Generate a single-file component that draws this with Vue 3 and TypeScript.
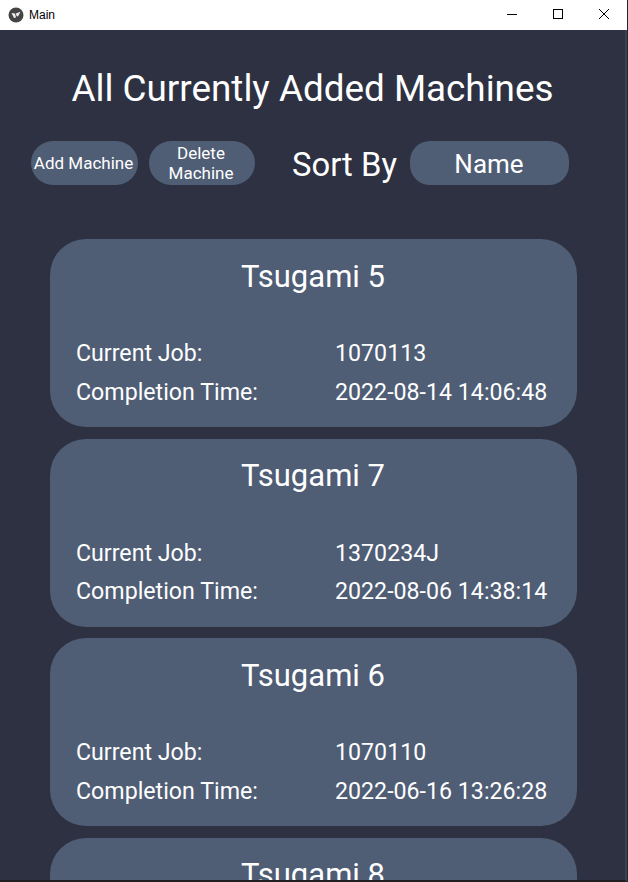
<script setup lang="ts">
interface Machine { name: string; job?: string; time?: string }
const machines: Machine[] = [
  { name: 'Tsugami 5', job: '1070113', time: '2022-08-14 14:06:48' },
  { name: 'Tsugami 7', job: '1370234J', time: '2022-08-06 14:38:14' },
  { name: 'Tsugami 6', job: '1070110', time: '2022-06-16 13:26:28' },
  { name: 'Tsugami 8' },
]
</script>

<template>
  <div class="window">
    <header class="titlebar">
      <svg class="logo" viewBox="0 0 16 16" width="16" height="16">
        <circle cx="8" cy="8" r="7.5" fill="#444" />
        <path d="M3.5 6 L7 6.5 L8 10.5 L6 11 Z M7.8 6.5 L12.5 4.8 L10 9.5 L8.6 9 Z" fill="#eee" />
      </svg>
      <span class="wintitle">Main</span>
      <div class="controls">
        <svg viewBox="0 0 46 30" width="46" height="30"><path d="M18 14.5 H28" stroke="#000" fill="none" /></svg>
        <svg viewBox="0 0 46 30" width="46" height="30"><rect x="18.5" y="9.5" width="9" height="9" stroke="#000" fill="none" /></svg>
        <svg viewBox="0 0 46 30" width="46" height="30"><path d="M18 9 L28 19 M28 9 L18 19" stroke="#000" fill="none" /></svg>
      </div>
    </header>
    <main class="content">
      <h1 class="heading">All Currently Added Machines</h1>
      <div class="toolbar">
        <button class="btn add">Add Machine</button>
        <button class="btn del">Delete<br />Machine</button>
        <span class="sort-label">Sort By</span>
        <button class="sort">Name</button>
      </div>
      <div class="list">
        <section v-for="m in machines" :key="m.name" class="card">
          <h2 class="card-title">{{ m.name }}</h2>
          <template v-if="m.job">
            <div class="row"><span class="key">Current Job:</span><span>{{ m.job }}</span></div>
            <div class="row second"><span class="key">Completion Time:</span><span>{{ m.time }}</span></div>
          </template>
        </section>
      </div>
    </main>
  </div>
</template>

<style>
html, body { margin: 0; overflow: hidden; }
</style>

<style scoped>
.window {
  width: 628px; height: 882px; box-sizing: border-box; display: flex; flex-direction: column; overflow: hidden;
  font-family: Roboto, sans-serif; color: #fff; background: #2d3142; border-right: 1px solid #23252f;
}
.titlebar {
  height: 30px; flex: none; background: #fff; color: #000; display: flex; align-items: center;
  padding-left: 8px; box-sizing: border-box;
}
.logo { margin-right: 5px; }
.wintitle { font: 12px "Liberation Sans", sans-serif; }
.controls { margin-left: auto; display: flex; }
.controls svg { display: block; }
.content { flex: 1; min-height: 0; overflow: hidden; border-right: 2px solid #3d4253; border-bottom: 2px solid #1e1e1e; }
.heading {
  margin: 0; padding-top: 38px; height: 42px; line-height: 42px; text-align: center;
  font-size: 36.85px; font-weight: 400; width: 625px;
}
.toolbar { display: flex; align-items: center; margin-top: 31px; padding-left: 31px; height: 44px; }
.btn, .sort {
  border: 0; background: #4f5d75; color: #fff; font-family: inherit; padding: 0; display: block;
}
.btn { height: 44px; width: 107px; border-radius: 22px; font-size: 17px; line-height: 20px; padding-right: 2px; }
.del { margin-left: 11px; width: 106px; }
.sort-label { font-size: 32.8px; margin-left: 37px; width: 118px; white-space: nowrap; padding-top: 4px; }
.sort { width: 159px; height: 44px; border-radius: 20px; font-size: 26px; padding-top: 1px; padding-right: 1px; }
.list { margin-top: 54px; padding-left: 50px; display: flex; flex-direction: column; gap: 11.6px; }
.card {
  width: 527px; height: 188px; flex: none; box-sizing: border-box; background: #4f5d75;
  border-radius: 36px; padding: 0 26px;
}
.card-title {
  margin: 0; padding-top: 18.6px; height: 38px; line-height: 38px; font-size: 31px; font-weight: 400;
  text-align: center; width: 474px;
}
.row { display: flex; font-size: 23.2px; line-height: 26px; margin-top: 44.4px; white-space: nowrap; }
.row.second { margin-top: 12.7px; }
.key { width: 259px; flex: none; }
</style>
